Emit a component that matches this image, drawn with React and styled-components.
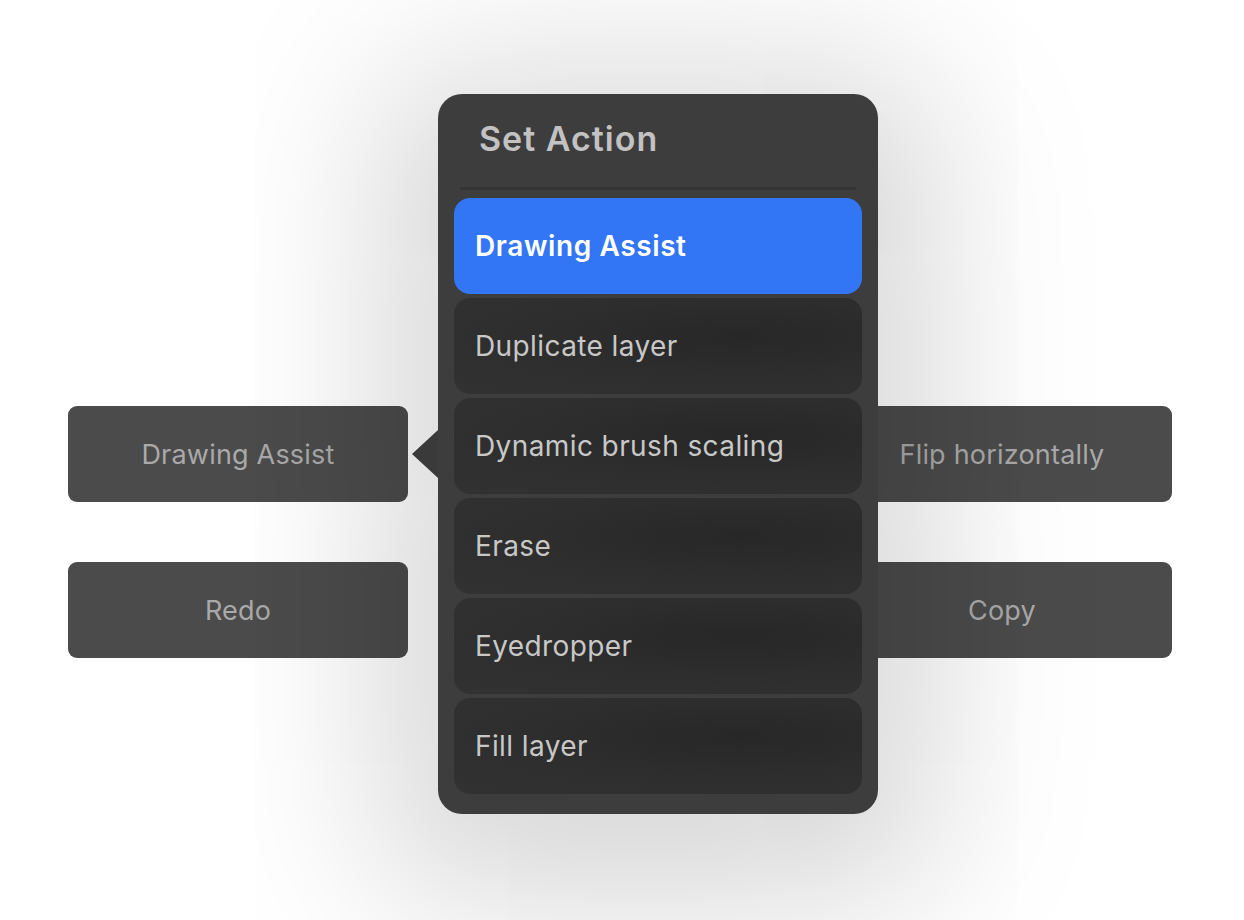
import styled, { createGlobalStyle } from "styled-components";

const GlobalStyle = createGlobalStyle`
  html, body {
    margin: 0;
    padding: 0;
    background: #ffffff;
    font-family: Inter, "Noto Sans", "Liberation Sans", sans-serif;
  }
`;

const Stage = styled.div`
  width: 1244px;
  height: 920px;
  overflow: hidden;
  display: flex;
  align-items: flex-start;
  padding: 94px 0 0 68px;
  box-sizing: border-box;
`;

const SideColumn = styled.div`
  display: flex;
  flex-direction: column;
  gap: 60px;
  margin-top: 312px;
  position: relative;
  z-index: ${(p) => (p.$under ? 0 : 1)};
  margin-left: ${(p) => (p.$under ? "-46px" : "0")};
`;

const SideButton = styled.div`
  width: 340px;
  height: 96px;
  border-radius: 9px;
  background: #4b4b4b;
  color: #a9a9a9;
  font-size: 27px;
  display: flex;
  align-items: center;
  justify-content: center;
  letter-spacing: 0.2px;
`;

const Popover = styled.div`
  position: relative;
  z-index: 2;
  margin-left: 30px;
  width: 440px;
  height: 720px;
  box-sizing: border-box;
  border-radius: 24px;
  background: #3d3d3d;
  box-shadow: 0 30px 170px 55px rgba(0, 0, 0, 0.17);
  padding: 0 16px 20px;
  display: flex;
  flex-direction: column;
`;

const Arrow = styled.div`
  position: absolute;
  left: -26px;
  top: 336px;
  width: 0;
  height: 0;
  border-top: 24px solid transparent;
  border-bottom: 24px solid transparent;
  border-right: 26px solid #3a3a3a;
`;

const Title = styled.div`
  height: 92px;
  padding-left: 25px;
  display: flex;
  align-items: center;
  color: #c2c2c2;
  font-size: 34px;
  font-weight: 600;
  letter-spacing: 1px;
  padding-bottom: 4px;
`;

const Divider = styled.div`
  height: 3px;
  margin: 0 6px 8px;
  background: #343434;
  border-radius: 2px;
`;

const List = styled.div`
  display: flex;
  flex-direction: column;
  gap: 4px;
`;

const Row = styled.div`
  height: 96px;
  border-radius: 16px;
  padding-left: 21px;
  display: flex;
  align-items: center;
  font-size: 28px;
  letter-spacing: ${(p) => (p.$active ? "0.6px" : "0.4px")};
  font-weight: ${(p) => (p.$active ? 600 : 400)};
  color: ${(p) => (p.$active ? "#ffffff" : "#c8c8c8")};
  background: ${(p) =>
    p.$active
      ? "#3276f5"
      : "radial-gradient(ellipse at 70% 40%, #272727 0%, #2d2d2d 45%, #323232 100%)"};
`;

const actions = [
  "Drawing Assist",
  "Duplicate layer",
  "Dynamic brush scaling",
  "Erase",
  "Eyedropper",
  "Fill layer",
];

export default function App() {
  return (
    <>
      <GlobalStyle />
      <Stage>
        <SideColumn>
          <SideButton>Drawing Assist</SideButton>
          <SideButton>Redo</SideButton>
        </SideColumn>
        <Popover>
          <Arrow />
          <Title>Set Action</Title>
          <Divider />
          <List>
            {actions.map((a, i) => (
              <Row key={a} $active={i === 0}>
                {a}
              </Row>
            ))}
          </List>
        </Popover>
        <SideColumn $under>
          <SideButton>Flip horizontally</SideButton>
          <SideButton>Copy</SideButton>
        </SideColumn>
      </Stage>
    </>
  );
}
